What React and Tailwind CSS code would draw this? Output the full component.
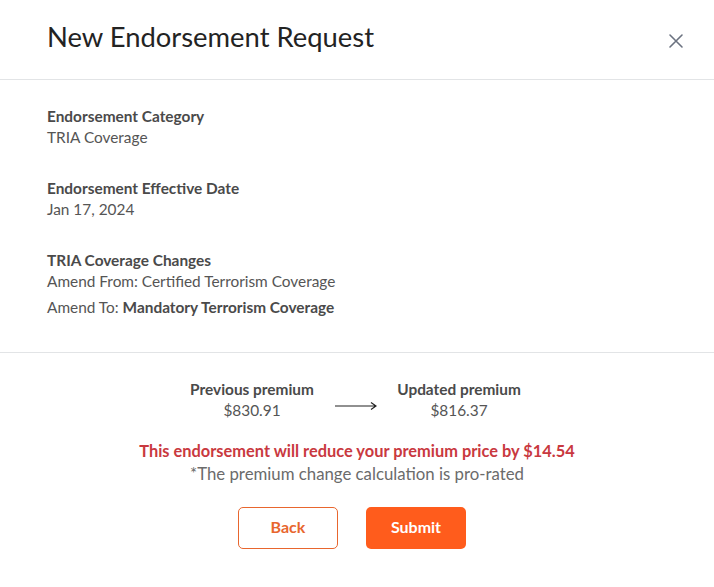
import React from "react";

export default function App() {
  return (
    <div className="w-[714px] h-[587px] bg-white overflow-hidden" style={{ fontFamily: "Lato, 'Noto Sans', sans-serif" }}>
      <div className="h-[80px] flex items-center justify-between pl-[47px] pr-[30px] border-b border-[#e2e4e6]">
        <h1 className="text-[27.4px] leading-none text-[#232323] pb-[5px]">New Endorsement Request</h1>
        <svg width="16" height="16" viewBox="0 0 16 16" className="mt-[2px]">
          <path d="M2 2 L14 14 M14 2 L2 14" stroke="#6b7280" strokeWidth="1.6" strokeLinecap="round" />
        </svg>
      </div>
      <div className="pl-[47px] pt-[26px] pb-[34px] border-b border-[#e2e4e6] text-[15.4px] text-[#555]">
        <div className="flex flex-col">
          <div className="font-bold text-[#4a4a4a] leading-[21px]">Endorsement Category</div>
          <div className="leading-[21px]">TRIA Coverage</div>
        </div>
        <div className="flex flex-col mt-[30px]">
          <div className="font-bold text-[#4a4a4a] leading-[21px]">Endorsement Effective Date</div>
          <div className="leading-[21px]">Jan 17, 2024</div>
        </div>
        <div className="flex flex-col mt-[30px]">
          <div className="font-bold text-[#4a4a4a] leading-[21px]">TRIA Coverage Changes</div>
          <div className="leading-[21px]">Amend From: Certified Terrorism Coverage</div>
          <div className="leading-[21px] mt-[5px]">Amend To: <span className="font-bold text-[#4a4a4a]">Mandatory Terrorism Coverage</span></div>
        </div>
      </div>
      <div className="flex flex-col items-center pt-[26px]">
        <div className="flex items-center gap-[17px] text-[15.4px] pr-[3px]">
          <div className="flex flex-col items-center w-[130px]">
            <div className="font-bold text-[#4a4a4a] leading-[21px]">Previous premium</div>
            <div className="text-[#555] leading-[21px]">$830.91</div>
          </div>
          <svg width="43" height="10" viewBox="0 0 43 10" className="mt-[12px]">
            <path d="M1 5 H42 M37 1.5 L42 5 L37 8.5" stroke="#222" strokeWidth="1.2" fill="none" />
          </svg>
          <div className="flex flex-col items-center w-[130px]">
            <div className="font-bold text-[#4a4a4a] leading-[21px]">Updated premium</div>
            <div className="text-[#555] leading-[21px]">$816.37</div>
          </div>
        </div>
        <div className="mt-[19px] text-[16.4px] font-bold text-[#c9393f] leading-[22px]">This endorsement will reduce your premium price by $14.54</div>
        <div className="mt-[1px] text-[16.8px] text-[#6b6b6b] leading-[22px]">*The premium change calculation is pro-rated</div>
        <div className="flex gap-[28px] mt-[22px] pr-[10px]">
          <button className="w-[100px] h-[42px] rounded-[5px] border border-[#e8662e] text-[#e8662e] font-bold text-[16px] pb-[3px]">Back</button>
          <button className="w-[100px] h-[42px] rounded-[5px] bg-[#ff5c1c] text-white font-bold text-[16px] pb-[3px]">Submit</button>
        </div>
      </div>
    </div>
  );
}
